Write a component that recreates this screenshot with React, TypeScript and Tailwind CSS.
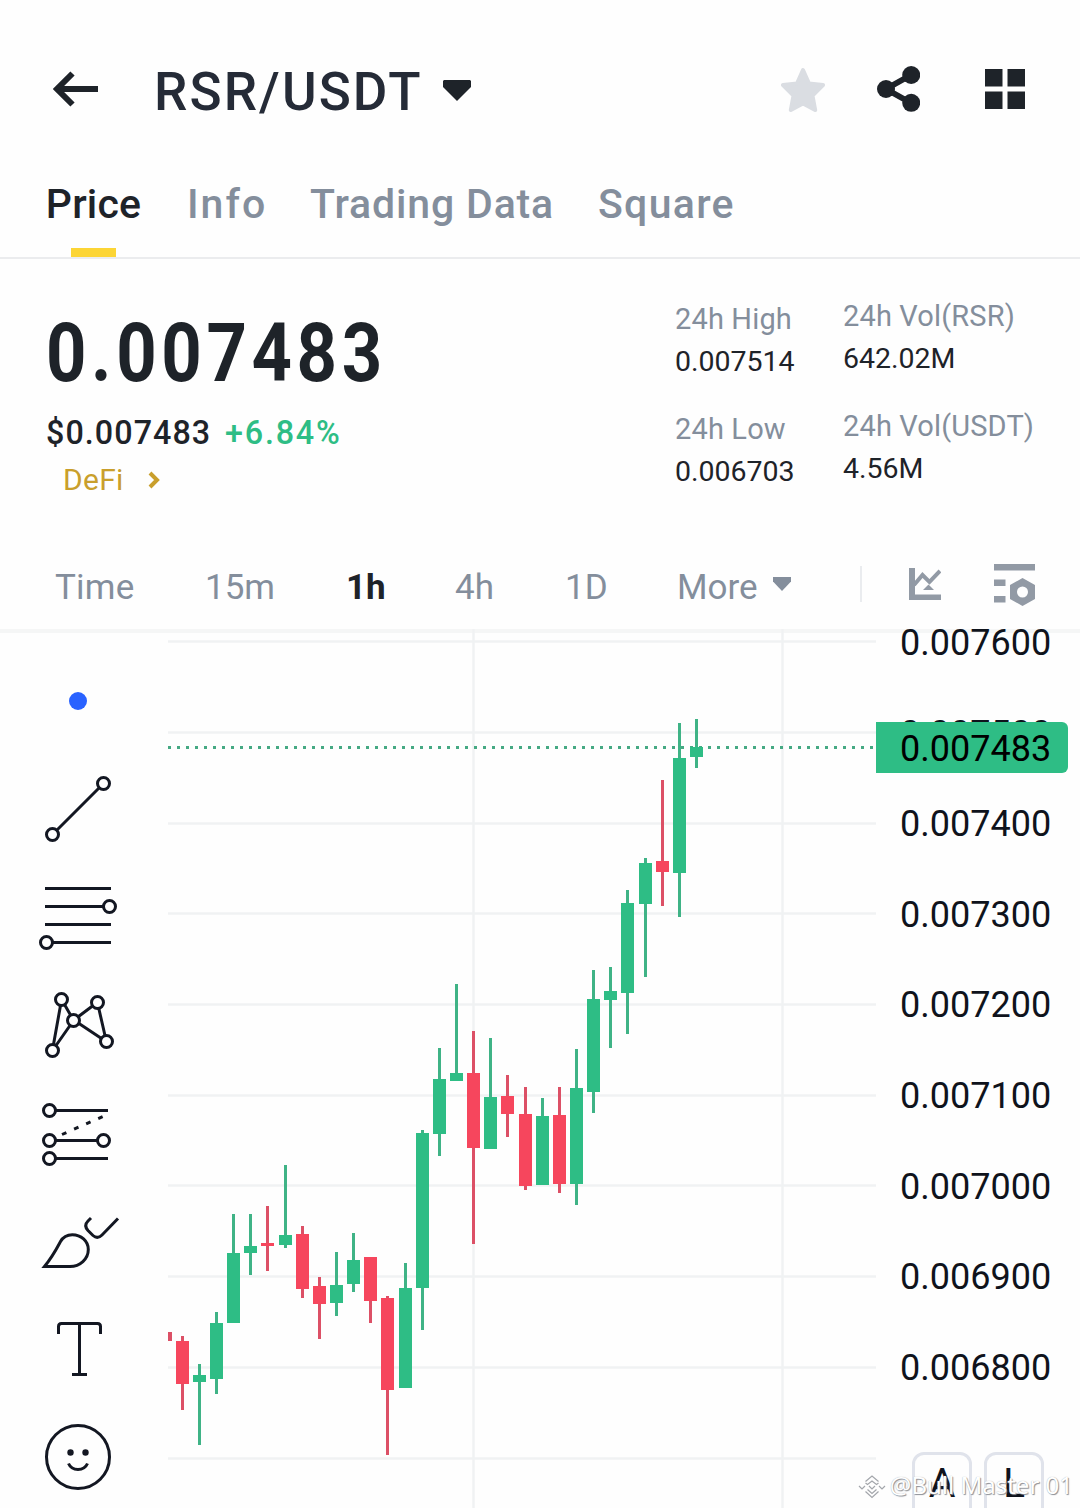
import type { ReactNode } from "react";

type Candle = [x: number, high: number, low: number, top: number, bottom: number, up: boolean];

const candles: Candle[] = [
  [182.5, 1336, 1410, 1341, 1384, false],
  [199.5, 1364, 1445, 1375, 1382, true],
  [216.5, 1312, 1394, 1323, 1379, true],
  [233.5, 1214, 1323, 1253, 1323, true],
  [250.5, 1214, 1275, 1246, 1253, true],
  [267.5, 1206, 1271, 1243, 1246, false],
  [285.5, 1165, 1248, 1235, 1245, true],
  [302.5, 1226, 1298, 1234, 1289, false],
  [319.5, 1277, 1339, 1286, 1304, false],
  [336.5, 1252, 1316, 1285, 1303, true],
  [353.5, 1233, 1292, 1260, 1284, true],
  [370.5, 1257, 1323, 1257, 1301, false],
  [387.5, 1296, 1455, 1298, 1390, false],
  [405.5, 1263, 1388, 1288, 1388, true],
  [422.5, 1130, 1330, 1133, 1288, true],
  [439.5, 1048, 1156, 1079, 1134, true],
  [456.5, 984, 1081, 1073, 1081, true],
  [473.5, 1031, 1244, 1073, 1148, false],
  [490.5, 1038, 1149, 1097, 1149, true],
  [507.5, 1075, 1137, 1096, 1114, false],
  [525.5, 1087, 1190, 1114, 1186, false],
  [542.5, 1098, 1185, 1116, 1185, true],
  [559.5, 1087, 1193, 1115, 1184, false],
  [576.5, 1049, 1205, 1088, 1184, true],
  [593.5, 970, 1113, 999, 1092, true],
  [610.5, 967, 1048, 991, 1000, true],
  [627.5, 890, 1034, 903, 993, true],
  [645.5, 858, 977, 863, 904, true],
  [662.5, 780, 906, 861, 872, false],
  [679.5, 723, 917, 758, 873, true],
  [696.5, 719, 768, 747, 757, true],
];

const gridRows = [641.5, 732.5, 823.5, 913.5, 1004.5, 1095.5, 1185.5, 1276.5, 1367.5, 1458.5];

const axisLabels = [
  "0.007600",
  "0.007500",
  "0.007400",
  "0.007300",
  "0.007200",
  "0.007100",
  "0.007000",
  "0.006900",
  "0.006800",
];

function Tool({ children }: { children: ReactNode }) {
  return (
    <svg
      viewBox="0 0 108 108"
      className="h-[108px] w-[108px] shrink-0"
      fill="none"
      stroke="#131722"
      strokeWidth="3"
    >
      {children}
    </svg>
  );
}

function Header() {
  return (
    <header className="flex h-[178px] items-center pl-[52px] pr-[55px]">
      <svg viewBox="0 0 46 36" className="h-9 w-[46px]" fill="none" stroke="#1e2329" strokeWidth="6">
        <path d="M46 18H5M20.5 2.5 5 18l15.5 15.5" />
      </svg>
      <h1 className="ml-14 w-[289px] whitespace-nowrap pt-[6px] text-[53px] font-medium leading-[60px] tracking-[2.1px] text-[#252b37]">
        RSR/USDT
      </h1>
      <svg viewBox="0 0 28 21" className="mt-[2px] h-[21px] w-7" fill="#1e2329">
        <path d="M1 0h26l1 1v6L14 21 0 7V1z" />
      </svg>
      <div className="ml-auto flex items-center">
        <svg viewBox="0 0 44 46" className="mt-px h-[46px] w-11" fill="#dadde2" stroke="#dadde2" strokeWidth="4" strokeLinejoin="round">
          <path d="M22 3l6 13.5 14 1.5-10.500 10.500 2.700 14.500L22 36.500 9.800 43l2.700-14.500L2 18l14-1.500z" />
        </svg>
        <svg viewBox="0 0 43 46" className="ml-[52px] h-[46px] w-[43px]" fill="#1e2329">
          <path d="M34 9 9 23l25 14" fill="none" stroke="#1e2329" strokeWidth="6" />
          <circle cx="9" cy="23" r="9" />
          <circle cx="34.200" cy="9" r="9" />
          <circle cx="34.200" cy="36.800" r="9" />
        </svg>
        <svg viewBox="0 0 40 40" className="ml-[65px] h-10 w-10" fill="#1e2329">
          <path d="M0 0h17.500v17.500H0zM22.500 0H40v17.500H22.500zM0 22.500h17.500V40H0zM22.500 22.500H40V40H22.500z" />
        </svg>
      </div>
    </header>
  );
}

function Tabs() {
  return (
    <nav className="flex h-[81px] border-b-2 border-[#ebecee] pl-[46px] text-[41px] font-medium leading-[52px] text-[#848e9c]">
      <div className="flex w-[95px] flex-col items-center whitespace-nowrap tracking-[0.2px] text-[#1e2329]">
        Price
        <span className="mt-[18px] h-[9px] w-[45px] shrink-0 bg-[#fcd535]" />
      </div>
      <span className="ml-[46px] w-[78px] whitespace-nowrap tracking-[2px]">Info</span>
      <span className="ml-[45px] w-[243px] whitespace-nowrap tracking-[0.85px]">Trading Data</span>
      <span className="ml-[45px] whitespace-nowrap tracking-[1.3px]">Square</span>
    </nav>
  );
}

function Stat({ label, value }: { label: string; value: string }) {
  return (
    <div className="flex h-[110px] flex-col whitespace-nowrap leading-9">
      <span className="text-[29px] tracking-[0.15px] text-[#848e9c]">{label}</span>
      <span className="mt-[7px] text-[28.5px] text-[#1e2329]">{value}</span>
    </div>
  );
}

function Summary() {
  return (
    <section className="flex h-[288px] pl-[46px]">
      <div className="w-[629px] pt-[49px]">
        <div className="origin-left scale-x-[0.86] text-[82px] font-bold leading-[90px] tracking-[5.4px] text-[#1e2329]">
          0.007483
        </div>
        <div className="mt-[14px] flex text-[34px] font-medium leading-10">
          <span className="w-[179px] origin-left scale-x-95 whitespace-nowrap tracking-[1.1px] text-[#1e2329]">
            $0.007483
          </span>
          <span className="origin-left scale-x-95 whitespace-nowrap tracking-[1.9px] text-[#2ebd85]">+6.84%</span>
        </div>
        <div className="mt-2 flex items-center pl-[17px] text-[30px] leading-10 text-[#c99f2c]">
          <span className="w-[85px] tracking-[0.3px]">DeFi</span>
          <svg viewBox="0 0 12 18" className="h-[18px] w-3" fill="none" stroke="#c99f2c" strokeWidth="4">
            <path d="M2 2l7 7-7 7" />
          </svg>
        </div>
      </div>
      <div className="w-[168px] pt-[42px]">
        <Stat label="24h High" value="0.007514" />
        <Stat label="24h Low" value="0.006703" />
      </div>
      <div className="pt-[39px]">
        <Stat label="24h Vol(RSR)" value="642.02M" />
        <Stat label="24h Vol(USDT)" value="4.56M" />
      </div>
    </section>
  );
}

function Intervals() {
  return (
    <div className="flex h-[86px] items-center whitespace-nowrap border-b-4 border-[#f5f6f6] pl-[55px] pr-11 text-[35px] text-[#848e9c]">
      <span className="w-[150px] tracking-[0.2px]">Time</span>
      <span className="w-[141px]">15m</span>
      <span className="w-[109px] font-bold text-[#1e2329]">1h</span>
      <span className="w-[110px]">4h</span>
      <span className="w-[112px]">1D</span>
      <span className="w-24">More</span>
      <svg viewBox="0 0 18 14" className="mb-2 h-[14px] w-[18px]" fill="#848e9c">
        <path d="M0 0h18v4.500L9 14 0 4.500z" />
      </svg>
      <span className="ml-[69px] mb-2 h-9 w-[2px] bg-[#eaecef]" />
      <svg viewBox="0 0 32 32" className="mb-2 ml-[47px] h-8 w-8" fill="#929aa5">
        <path d="M0 0h6v26.500h26V32H0z" />
        <path d="M5 17 13.500 7l7 7L31 3" fill="none" stroke="#929aa5" strokeWidth="4" />
        <path d="M19.500 16.500 25 22H14z" />
      </svg>
      <svg viewBox="0 0 42 42" className="mb-[6px] ml-[53px] h-[42px] w-[42px] shrink-0" fill="#929aa5">
        <path d="M0 0h41v6.500H0zM0 15.500h11.500V22H0zM0 32h11.500v6.500H0z" />
        <path fillRule="evenodd" d="M28.500 14 41 21v14l-12.500 7L16 35V21zM28.500 22.500a5.500 5.500 0 1 0 0 11 5.500 5.500 0 1 0 0-11z" />
      </svg>
    </div>
  );
}

function DrawingTools() {
  return (
    <aside className="flex w-[168px] shrink-0 flex-col pl-6 pt-[18px]">
      <Tool>
        <circle cx="54" cy="54" r="9" fill="#2962ff" stroke="none" />
      </Tool>
      <Tool>
        <circle cx="28.500" cy="79.500" r="6" />
        <circle cx="79.500" cy="28.500" r="6" />
        <path d="M33 75 75 33" />
      </Tool>
      <Tool>
        <path d="M21 25.500h66M21 43.500h58.500M21 61.500h66M28.500 79.500H87" />
        <circle cx="85.500" cy="43.500" r="6" />
        <circle cx="22.500" cy="79.500" r="6" />
      </Tool>
      <Tool>
        <path d="M36.500 34.500 29.500 73.500M40.500 33.500l6 10.500M68.500 35 54.500 45.500M74.800 37.500l6.200 27M55 52.500l22.500 15M46 54.500 32 74.500" />
        <circle cx="37.500" cy="28.500" r="6" />
        <circle cx="73.500" cy="31.500" r="6" />
        <circle cx="49.500" cy="49.500" r="6" />
        <circle cx="28.500" cy="79.500" r="6" />
        <circle cx="82.500" cy="70.500" r="6" />
      </Tool>
      <Tool>
        <path d="M31.500 31.500H84M31.500 61.500h42M31.500 79.500H84" />
        <path d="M38 55.500 80 37" strokeDasharray="4.800 8.400" />
        <circle cx="25.500" cy="31.500" r="6" />
        <circle cx="25.500" cy="61.500" r="6" />
        <circle cx="79.500" cy="61.500" r="6" />
        <circle cx="25.500" cy="79.500" r="6" />
      </Tool>
      <Tool>
        <path d="M20.500 79.500C29 69 33 61 36.500 54.500 39 50 43 47.700 48.300 47.700c8.700 0 16 6.300 16 14.800C64.300 72 56 79.500 46 79.500z" />
        <path d="M67 31l-3 3q-4.500 4.500 0 9.500l5 5q4.500 4 9-.5l16-16.500" />
      </Tool>
      <Tool>
        <path d="M34.500 39v-7.500q0-3 3-3h36q3 0 3 3V39M55.500 28.500v51M48 79.500h15" />
      </Tool>
      <Tool>
        <circle cx="54" cy="54" r="31.500" />
        <circle cx="46.500" cy="49.500" r="3.200" fill="#131722" stroke="none" />
        <circle cx="61.500" cy="49.500" r="3.200" fill="#131722" stroke="none" />
        <path d="M44.500 60.500c3.500 8 15.500 8 19 0" />
      </Tool>
    </aside>
  );
}

function Chart() {
  return (
    <svg viewBox="168 629 708 879" className="h-[879px] w-[708px] shrink-0">
      <g stroke="#f0f2f3" strokeWidth="2.500">
        {gridRows.map((y) => (
          <line key={y} x1="168" x2="876" y1={y} y2={y} />
        ))}
        <line x1="473.500" x2="473.500" y1="629" y2="1508" />
        <line x1="782.500" x2="782.500" y1="629" y2="1508" />
      </g>
      <line x1="168" x2="876" y1="747.500" y2="747.500" stroke="#45a983" strokeWidth="3" strokeDasharray="3 6" />
      <rect x="168" y="1332" width="4" height="9" fill="#dc5066" />
      {candles.map(([x, high, low, top, bottom, up]) => (
        <g key={x}>
          <rect x={x - 1.5} y={high} width="3" height={low - high} fill={up ? "#3fb386" : "#dc5066"} />
          <rect x={x - 6.5} y={top} width="13" height={bottom - top} fill={up ? "#2ebd85" : "#f6465d"} />
        </g>
      ))}
    </svg>
  );
}

function PriceAxis() {
  return (
    <div className="relative w-[204px] shrink-0 text-[36px] text-[#0f131c]">
      <div className="-mt-[31px] flex flex-col pl-6">
        {axisLabels.map((label) => (
          <span key={label} className="h-[90.6px] leading-[90.6px]">
            {label}
          </span>
        ))}
      </div>
      <div className="absolute left-0 top-[93px] h-[51px] w-[192px] rounded-r-md bg-[#2ebd85] pl-6 leading-[54px] text-black">
        0.007483
      </div>
      <div className="absolute left-9 top-[823px] flex gap-3 text-[41px] leading-[56px]">
        <span className="h-20 w-[60px] rounded-xl border-[3px] border-[#e0e3eb] text-center">A</span>
        <span className="h-20 w-[60px] rounded-xl border-[3px] border-[#e0e3eb] text-center">L</span>
      </div>
    </div>
  );
}

function Watermark() {
  return (
    <div className="absolute bottom-2 right-[7px] flex items-center whitespace-nowrap font-['Noto_Sans',sans-serif] text-[24px] leading-[30px] text-white [text-shadow:1px_1px_1px_#8b8f96,0_0_1px_#a5a8ad]">
      <svg viewBox="0 0 28 24" className="mr-1 mt-1 h-6 w-7" fill="none" stroke="#a3a6ab" strokeWidth="1.2">
        <path d="M7.500 6.500 14 1l6.500 5.500M7.500 8 9.500 9.500 14 6l4.500 3.500 2-1.500" />
        <path d="M1 11l3 3 3-3M21 11l3 3 3-3M11 11l3 3 3-3" />
        <path d="M7.500 16.500 14 22.500l6.500-6M9.500 14.500l4.500 4 4.500-4" />
      </svg>
      <span>@Bull Master 01</span>
    </div>
  );
}

export default function App() {
  return (
    <div className="relative h-[1508px] w-[1080px] overflow-hidden bg-[#fefefe] font-[Roboto,sans-serif]">
      <Header />
      <Tabs />
      <Summary />
      <Intervals />
      <main className="relative -mt-1 flex h-[879px] overflow-hidden">
        <DrawingTools />
        <Chart />
        <PriceAxis />
      </main>
      <Watermark />
    </div>
  );
}
